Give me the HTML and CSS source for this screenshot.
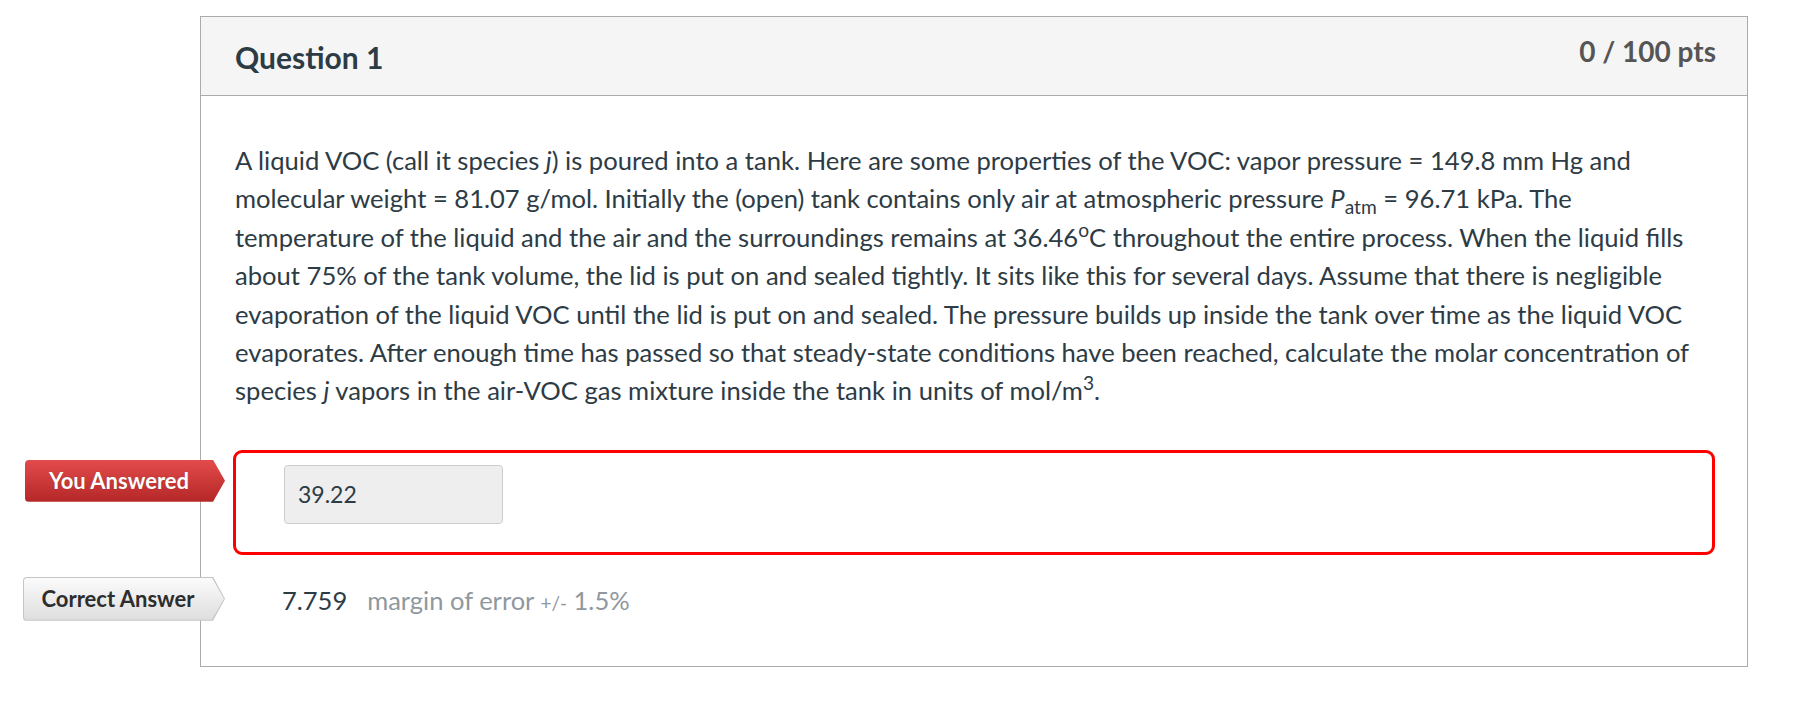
FILE: index.html
```html
<!DOCTYPE html>
<html lang="en">
<head>
<meta charset="utf-8">
<title>Question 1</title>
<link rel="stylesheet" href="styles.css">
</head>
<body>
<div class="page">
  <div class="question">
    <div class="header">
      <span class="name">Question 1</span>
      <span class="points">0 / 100 pts</span>
    </div>
    <div class="text">
      <p>A liquid VOC (call it species <em>j</em>) is poured into a tank. Here are some properties of the VOC: vapor pressure = 149.8 mm Hg and molecular weight = 81.07 g/mol. Initially the (open) tank contains only air at atmospheric pressure <em>P</em><sub>atm</sub> = 96.71 kPa. The temperature of the liquid and the air and the surroundings remains at 36.46<sup>o</sup>C throughout the entire process. When the liquid fills about 75% of the tank volume, the lid is put on and sealed tightly. It sits like this for several days. Assume that there is negligible evaporation of the liquid VOC until the lid is put on and sealed. The pressure builds up inside the tank over time as the liquid VOC evaporates. After enough time has passed so that steady-state conditions have been reached, calculate the molar concentration of species <em>j</em> vapors in the air-VOC gas mixture inside the tank in units of mol/m<sup>3</sup>.</p>
    </div>
    <div class="answers">
      <div class="answer wrong">
        <span class="arrow incorrect">You Answered</span>
        <div class="answer-box">
          <span class="input">39.22</span>
        </div>
      </div>
      <div class="answer right">
        <span class="arrow correct"><span class="arrow-label">Correct Answer</span></span>
        <span class="value">7.759</span>
        <span class="margin">margin of error <span class="pm">+/-</span> 1.5%</span>
      </div>
    </div>
  </div>
</div>
</body>
</html>
```

FILE: styles.css
```css
html, body {
  margin: 0;
  padding: 0;
  background: #ffffff;
}

body {
  font-family: Lato, "Open Sans", "Liberation Sans", sans-serif;
  color: #2d3b45;
}

.page {
  padding: 16px 0 0 200px;
}

.question {
  width: 1546px;
  border: 1px solid #ababab;
  background: #ffffff;
}

.header {
  height: 78px;
  background: #f5f5f5;
  border-bottom: 1px solid #ababab;
  display: flex;
  justify-content: space-between;
  align-items: flex-start;
  padding: 0 31px 0 34px;
}

.name {
  font-size: 30px;
  font-weight: 700;
  line-height: 36px;
  padding-top: 22px;
  color: #2d3b45;
}

.points {
  font-size: 28px;
  font-weight: 700;
  line-height: 34px;
  padding-top: 17px;
  color: #555555;
}

.text {
  padding: 45px 40px 0 34px;
}

.text p {
  margin: 0;
  font-size: 25.6px;
  line-height: 38.4px;
}

.text sub,
.text sup {
  font-size: 0.75em;
  line-height: 0;
}

.answers {
  padding: 40px 32px 44px 32px;
}

.answer {
  position: relative;
}

.answer.wrong {
  display: flex;
}

.answer-box {
  flex: 1;
  border: 3px solid #ff0000;
  border-radius: 9px;
  padding: 12px 48px 28px 48px;
}

.input {
  display: flex;
  align-items: center;
  width: 204px;
  height: 57px;
  padding-left: 13px;
  background: #eeeeee;
  border: 1px solid #cccccc;
  border-radius: 4px;
  font-size: 23px;
  color: #2d3b45;
}

.arrow {
  position: absolute;
  left: -208px;
  width: 200px;
  height: 42px;
  display: flex;
  align-items: center;
  justify-content: center;
  padding-right: 12px;
  box-sizing: border-box;
  font-size: 22px;
  font-weight: 700;
  border-radius: 4px 0 0 4px;
  clip-path: polygon(0 0, calc(100% - 12px) 0, 100% 50%, calc(100% - 12px) 100%, 0 100%);
}

.arrow.incorrect {
  top: 10px;
  color: #ffffff;
  background: linear-gradient(#e34b4b, #b42727);
  text-shadow: 0 0 1px rgba(0, 0, 0, 0.3);
}

.arrow.correct {
  top: 22px;
  left: -210px;
  width: 202px;
  height: 44px;
  color: #2d2d2d;
  background: #c4c4c4;
}

.arrow.correct::before {
  content: "";
  position: absolute;
  inset: 1px;
  border-radius: 3px 0 0 3px;
  background: linear-gradient(#fbfbfb, #dedede);
  clip-path: polygon(0 0, calc(100% - 12px) 0, 100% 50%, calc(100% - 12px) 100%, 0 100%);
}

.arrow-label {
  position: relative;
}

.answer.right {
  display: flex;
  align-items: baseline;
  padding: 26px 0 0 49px;
  line-height: 38px;
}

.value {
  font-size: 25.5px;
  color: #2d3b45;
}

.margin {
  margin-left: 20px;
  font-size: 25.5px;
  color: #8f989e;
}

.pm {
  font-size: 19px;
}
```
